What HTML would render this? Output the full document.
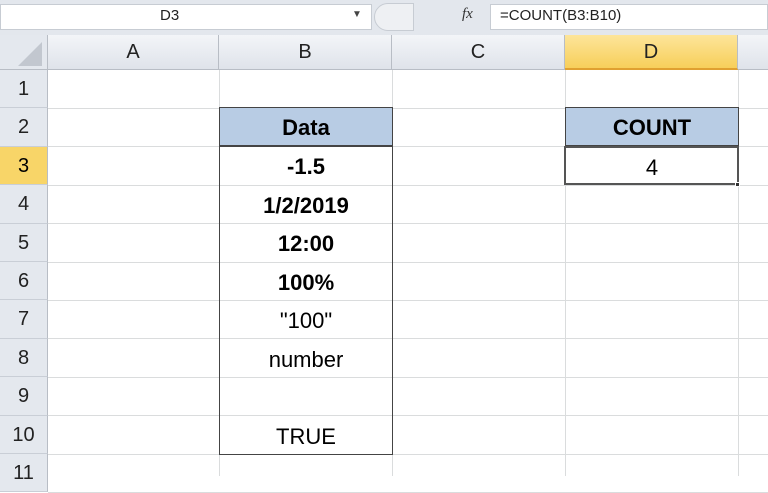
<!DOCTYPE html><html><head><style>
*{margin:0;padding:0;box-sizing:border-box}
body{width:768px;height:476px;overflow:hidden;background:#fff;font-family:"Liberation Sans",sans-serif;position:relative}
.a{position:absolute}
.vl{position:absolute;top:70px;bottom:0;width:1px;background:#dadcdd}
.hl{position:absolute;left:48px;right:0;height:1px;background:#dadcdd}
.rh{position:absolute;left:0;width:48px;text-align:center;font-size:20px;color:#222;background:#e4e8ee;border-bottom:1px solid #c9ced6;border-right:1px solid #b8bdc5}
.ch{position:absolute;top:35px;height:35px;text-align:center;line-height:35px;font-size:20px;color:#222;background:linear-gradient(#f3f5f8,#dfe3ea);border-right:1px solid #b8bdc5;border-bottom:1px solid #b8bdc5}
.c{position:absolute;text-align:center;font-size:22px;color:#000}
</style></head><body>
<div class="a" style="left:0;top:0;width:768px;height:35px;background:#e3e7ed"></div>
<div class="a" style="left:0;top:4px;width:372px;height:26px;background:#fff;border:1px solid #c7ccd3"></div>
<div class="a" style="left:160px;top:7px;font-size:15px;color:#222">D3</div>
<div class="a" style="left:352px;top:9px;font-size:10px;color:#444">▼</div>
<div class="a" style="left:374px;top:3px;width:40px;height:28px;border-radius:14px 0 0 14px;background:#eef0f3;border:1px solid #c7ccd3"></div>
<div class="a" style="left:462px;top:6px;font-size:15px;font-style:italic;font-family:'Liberation Serif',serif;color:#333">fx</div>
<div class="a" style="left:490px;top:4px;width:278px;height:26px;background:#fff;border:1px solid #c7ccd3"></div>
<div class="a" style="left:500px;top:7px;font-size:15px;color:#222">=COUNT(B3:B10)</div>
<div class="a" style="left:0;top:35px;width:48px;height:35px;background:#e4e8ee;border-right:1px solid #b8bdc5;border-bottom:1px solid #b8bdc5"></div>
<div class="a" style="left:18px;top:42px;width:0;height:0;border-left:24px solid transparent;border-bottom:24px solid #c2c7cf"></div>
<div class="ch" style="left:48px;width:171px">A</div>
<div class="ch" style="left:219px;width:173px">B</div>
<div class="ch" style="left:392px;width:173px">C</div>
<div class="ch" style="left:565px;width:173px;background:linear-gradient(#fde59a,#f7cf5a);border-bottom:2px solid #e0a030">D</div>
<div class="ch" style="left:738px;width:40px"></div>
<div class="vl" style="left:219px"></div><div class="vl" style="left:392px"></div><div class="vl" style="left:565px"></div><div class="vl" style="left:738px"></div>
<div id="rows"></div>
<script>
var h='';for(var i=1;i<=11;i++){var t=70+(i-1)*38.4;h+='<div class="hl" style="top:'+(t+38)+'px"></div><div class="rh" style="top:'+t+'px;height:38.4px;line-height:38px'+(i==3?';background:#f8d568;color:#000':'')+'">'+i+'</div>';}
document.getElementById('rows').innerHTML=h;
</script>
<div class="a" style="left:219px;top:107px;width:174px;height:39px;background:#b8cce4"></div>
<div class="a" style="left:219px;top:107px;width:174px;height:348px;border:1.5px solid #444"></div>
<div class="a" style="left:219px;top:145px;width:174px;height:1.5px;background:#444"></div>
<div class="c" style="left:219px;width:174px;top:115px;font-weight:bold">Data</div>
<div class="c" style="left:219px;width:174px;top:154px;font-weight:bold">-1.5</div>
<div class="c" style="left:219px;width:174px;top:193px;font-weight:bold">1/2/2019</div>
<div class="c" style="left:219px;width:174px;top:231px;font-weight:bold">12:00</div>
<div class="c" style="left:219px;width:174px;top:270px;font-weight:bold">100%</div>
<div class="c" style="left:219px;width:174px;top:308px">"100"</div>
<div class="c" style="left:219px;width:174px;top:347px">number</div>
<div class="c" style="left:219px;width:174px;top:424px">TRUE</div>
<div class="a" style="left:565px;top:107px;width:174px;height:39px;background:#b8cce4;border:1.5px solid #444"></div>
<div class="c" style="left:565px;width:174px;top:115px;font-weight:bold">COUNT</div>
<div class="a" style="left:564px;top:146px;width:175px;height:39px;border:2px solid #555"></div>
<div class="a" style="left:735px;top:182px;width:5px;height:5px;background:#333;border:1px solid #fff"></div>
<div class="c" style="left:565px;width:174px;top:155px">4</div>
</body></html>
